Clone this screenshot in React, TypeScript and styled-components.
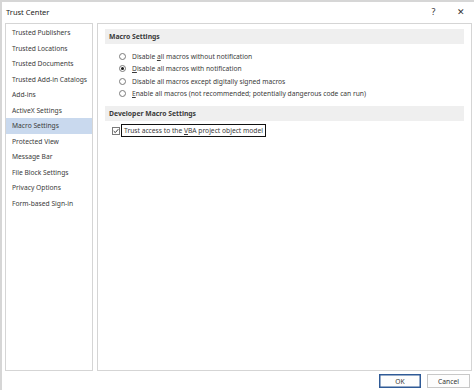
import React, { useState } from "react";
import styled, { createGlobalStyle } from "styled-components";

const GlobalStyle = createGlobalStyle`
  html, body {
    margin: 0;
    padding: 0;
    background: #d6d6d6;
  }
  * {
    box-sizing: border-box;
  }
`;

const Frame = styled.div`
  width: 474px;
  height: 390px;
  padding: 2px 0 0 2px;
  background: #d6d6d6;
  font-family: "Noto Sans", "Open Sans", sans-serif;
  color: #262626;
`;

const Dialog = styled.div`
  width: 100%;
  height: 100%;
  background: #ffffff;
  display: flex;
  flex-direction: column;
`;

const TitleBar = styled.div`
  height: 19px;
  display: flex;
  align-items: center;
  padding: 0 0 0 4px;
  font-size: 7.5px;
  color: #1a1a1a;
`;

const Title = styled.span`
  flex: 1;
`;

const TitleButton = styled.span`
  width: 27px;
  text-align: center;
  font-size: 9px;
  color: #333;
`;

const Body = styled.div`
  flex: 1;
  display: flex;
  gap: 4px;
  padding: 2px 2px 0 3px;
`;

const Nav = styled.div`
  width: 88px;
  border: 1px solid #d5d5d5;
  padding-top: 1px;
  display: flex;
  flex-direction: column;
`;

const NavItem = styled.div<{ $active?: boolean }>`
  height: 15.5px;
  display: flex;
  align-items: center;
  padding-left: 6px;
  font-size: 6.7px;
  color: #3a3a3a;
  white-space: nowrap;
  background: ${({ $active }) => ($active ? "#c9d9ee" : "transparent")};
`;

const Content = styled.div`
  flex: 1;
  border: 1px solid #d5d5d5;
  padding: 5px 7px 0 7px;
  display: flex;
  flex-direction: column;
`;

const SectionHeader = styled.div`
  height: 15px;
  display: flex;
  align-items: center;
  padding-left: 4px;
  background: #efefef;
  font-size: 6.8px;
  font-weight: 700;
  color: #3a3a3a;
`;

const OptionList = styled.div`
  display: flex;
  flex-direction: column;
  padding: 6px 0 6px 14px;
`;

const Option = styled.label`
  height: 12.5px;
  display: flex;
  align-items: center;
  gap: 6px;
  font-size: 6.7px;
  color: #3a3a3a;
  white-space: nowrap;
`;

const Radio = styled.span<{ $checked?: boolean }>`
  width: 7px;
  height: 7px;
  border-radius: 50%;
  border: 1px solid #7a7a7a;
  display: flex;
  align-items: center;
  justify-content: center;
  &::after {
    content: "";
    width: 3px;
    height: 3px;
    border-radius: 50%;
    background: ${({ $checked }) => ($checked ? "#1a1a1a" : "transparent")};
  }
`;

const CheckRow = styled.div`
  display: flex;
  align-items: center;
  gap: 1px;
  padding: 3px 0 0 7px;
  font-size: 6.7px;
`;

const CheckBox = styled.span`
  width: 8px;
  height: 8px;
  border: 1px solid #7a7a7a;
  display: flex;
  align-items: center;
  justify-content: center;
`;

const FocusLabel = styled.span`
  border: 1.5px solid #111;
  padding: 1px 2px;
  white-space: nowrap;
  color: #3a3a3a;
`;

const Footer = styled.div`
  height: 19px;
  display: flex;
  justify-content: flex-end;
  align-items: center;
  gap: 6px;
  padding: 1px 4px 0 0;
`;

const Button = styled.button<{ $primary?: boolean }>`
  width: ${({ $primary }) => ($primary ? "42px" : "43px")};
  height: 14px;
  padding: 0;
  font-family: inherit;
  font-size: 6.7px;
  color: #333;
  background: #fdfdfd;
  border: 1px solid ${({ $primary }) => ($primary ? "#2f5a96" : "#c8c8c8")};
  box-shadow: ${({ $primary }) => ($primary ? "inset 0 0 0 0.5px #2f5a96" : "none")};
`;

const navItems = [
  "Trusted Publishers",
  "Trusted Locations",
  "Trusted Documents",
  "Trusted Add-in Catalogs",
  "Add-ins",
  "ActiveX Settings",
  "Macro Settings",
  "Protected View",
  "Message Bar",
  "File Block Settings",
  "Privacy Options",
  "Form-based Sign-in",
];

const options: [string, string, string][] = [
  ["Disable ", "a", "ll macros without notification"],
  ["", "D", "isable all macros with notification"],
  ["Disable all macros except di", "g", "itally signed macros"],
  ["", "E", "nable all macros (not recommended; potentially dangerous code can run)"],
];

const App: React.FC = () => {
  const [selected, setSelected] = useState(1);

  return (
    <>
      <GlobalStyle />
      <Frame>
        <Dialog>
          <TitleBar>
            <Title>Trust Center</Title>
            <TitleButton>?</TitleButton>
            <TitleButton>✕</TitleButton>
          </TitleBar>
          <Body>
            <Nav>
              {navItems.map((item) => (
                <NavItem key={item} $active={item === "Macro Settings"}>
                  {item}
                </NavItem>
              ))}
            </Nav>
            <Content>
              <SectionHeader>Macro Settings</SectionHeader>
              <OptionList>
                {options.map(([pre, key, post], i) => (
                  <Option key={i} onClick={() => setSelected(i)}>
                    <Radio $checked={selected === i} />
                    <span>
                      {pre}
                      <u>{key}</u>
                      {post}
                    </span>
                  </Option>
                ))}
              </OptionList>
              <SectionHeader>Developer Macro Settings</SectionHeader>
              <CheckRow>
                <CheckBox>
                  <svg width="6" height="6" viewBox="0 0 6 6">
                    <path d="M0.7 3.1 L2.3 4.6 L5.3 1.2" fill="none" stroke="#222" strokeWidth="0.9" />
                  </svg>
                </CheckBox>
                <FocusLabel>
                  Trust access to the <u>V</u>BA project object model
                </FocusLabel>
              </CheckRow>
            </Content>
          </Body>
          <Footer>
            <Button $primary>OK</Button>
            <Button>Cancel</Button>
          </Footer>
        </Dialog>
      </Frame>
    </>
  );
};

export default App;
